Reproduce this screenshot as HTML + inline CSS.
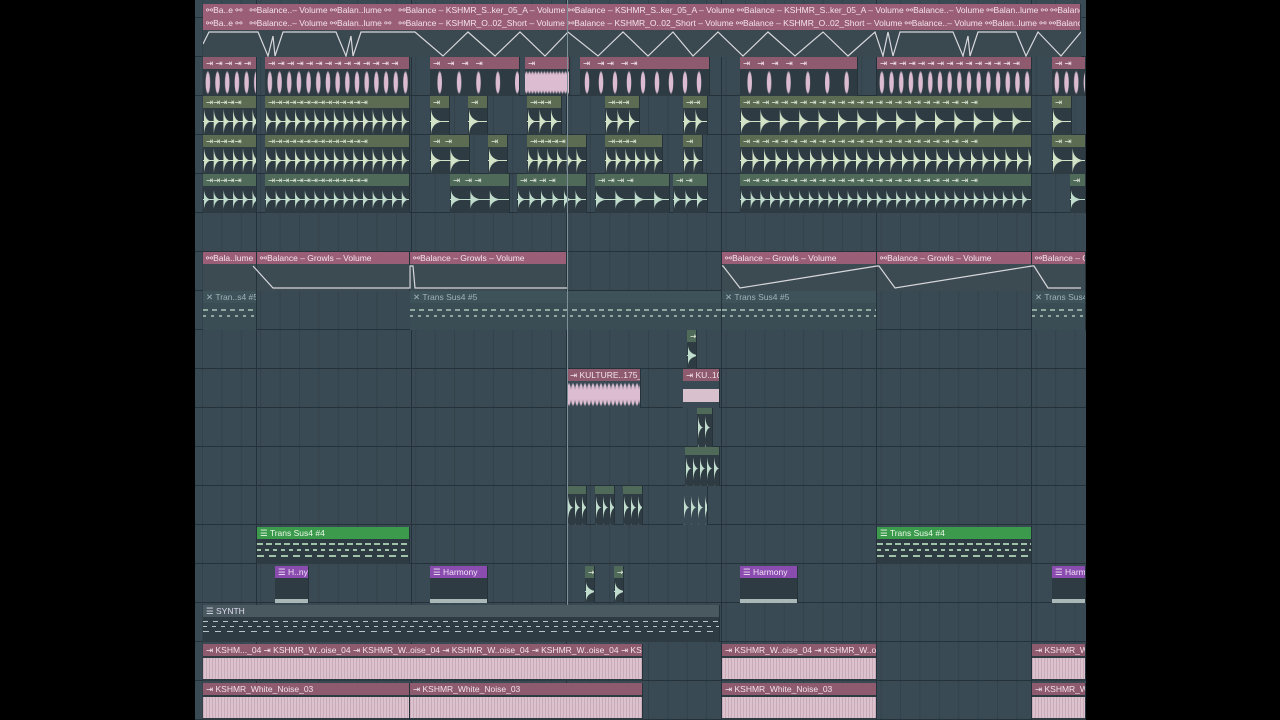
<!DOCTYPE html>
<html><head><meta charset="utf-8"><style>
*{margin:0;padding:0;box-sizing:border-box}
body{width:1280px;height:720px;background:#000;overflow:hidden;position:relative;font-family:"Liberation Sans",sans-serif}
#pl{position:absolute;left:195px;top:0;width:891px;height:720px;background-color:#3a4a54;
background-image:
linear-gradient(to bottom,rgba(0,0,0,0) 38px,#26323a 38px,#26323a 39px),
repeating-linear-gradient(to right,rgba(0,0,0,0) 0,rgba(0,0,0,0) 61px,#25313a 61px,#25313a 62px,rgba(0,0,0,0) 62px,rgba(0,0,0,0) 155px),
repeating-linear-gradient(to right,rgba(0,0,0,0) 0,rgba(0,0,0,0) 18.4px,#33414a 18.4px,#33414a 19.4px);
background-size:100% 39px,155px 100%,19.4px 100%;background-position:0 18px,0 0,8px 0}
.c{position:absolute;overflow:hidden;background:#2e3b43;border-right:1px solid #26323a}
.h{height:12px;font-size:8.5px;line-height:12px;color:#f3e3ea;white-space:nowrap;padding-left:3px;overflow:hidden}
.pk .h{background:#8e5a6e}
.ap .h{background:#9a5e76}
.gr .h{background:#5b6c53;color:#dfe8d8}
.gt .h{background:#506a5a;color:#dfe8d8}
.pu .h{background:#8a4cae;color:#f1e3f8}
.gs .h{background:#3c9a4c;color:#e8f8e8}
.sy .h{background:#4a5860;color:#dde}
.tr .h{background:#3e525a;color:#9fb3b8}
.w{position:absolute;left:0;right:0;top:12px;bottom:0}
svg.w{width:100%;height:calc(100% - 12px)}
.wp{background:radial-gradient(ellipse 2.5px 12px at 50% 50%,#dcbcd0 80%,rgba(0,0,0,0) 100%) 0 0/9.7px 100% repeat-x}
.wn{top:14px;bottom:2px;background:#d6bac6;background-image:repeating-linear-gradient(to right,#c8aab8 0 1px,#dcc2cc 1px 3px)}
.nt{background:repeating-linear-gradient(to right,#9fc2a8 0 6px,rgba(0,0,0,0) 6px 9px) 0 4px/100% 2px no-repeat,repeating-linear-gradient(to right,#9fc2a8 0 4px,rgba(0,0,0,0) 4px 8px) 0 10px/100% 2px no-repeat,repeating-linear-gradient(to right,#9fc2a8 0 7px,rgba(0,0,0,0) 7px 12px) 0 16px/100% 2px no-repeat}
.ntg{background:repeating-linear-gradient(to right,#8ea8a0 0 5px,rgba(0,0,0,0) 5px 9px) 0 6px/100% 2px no-repeat,repeating-linear-gradient(to right,#8ea8a0 0 3px,rgba(0,0,0,0) 3px 8px) 0 12px/100% 2px no-repeat}
.nts{background:repeating-linear-gradient(to right,#b8c4c8 0 5px,rgba(0,0,0,0) 5px 10px) 0 4px/100% 1px no-repeat,repeating-linear-gradient(to right,#b8c4c8 0 4px,rgba(0,0,0,0) 4px 9px) 0 9px/100% 1px no-repeat,repeating-linear-gradient(to right,#b8c4c8 0 6px,rgba(0,0,0,0) 6px 12px) 0 14px/100% 1px no-repeat}
</style></head><body>
<svg width="0" height="0" style="position:absolute"><defs>
<pattern id="g10" width="9.7" height="27" patternUnits="userSpaceOnUse"><path d="M1,1 Q2,13 8.5,13.5 Q2,14 1,26 Z M0,13 h9.7 v1 h-9.7z" fill="#d2e2c6"/></pattern>
<pattern id="g11" width="11.5" height="27" patternUnits="userSpaceOnUse"><path d="M1,1 Q2,13 10,13.5 Q2,14 1,26 Z M0,13 h11.5 v1 h-11.5z" fill="#d2e2c6"/></pattern>
<pattern id="g20" width="19.4" height="27" patternUnits="userSpaceOnUse"><path d="M1,1 Q2,13 14,13.5 Q2,14 1,26 Z M0,13 h19.4 v1 h-19.4z" fill="#d2e2c6"/></pattern>
<pattern id="g6" width="6" height="27" patternUnits="userSpaceOnUse"><path d="M1,1 Q2,13 5.5,13.5 Q2,14 1,26 Z" fill="#d2e2c6"/></pattern>
<pattern id="t10" width="9.7" height="27" patternUnits="userSpaceOnUse"><path d="M1,4 Q2,13 8.5,13.5 Q2,14 1,23 Z M0,13 h9.7 v1 h-9.7z" fill="#c0dccc"/></pattern>
<pattern id="t11" width="11.5" height="27" patternUnits="userSpaceOnUse"><path d="M1,4 Q2,13 10,13.5 Q2,14 1,23 Z M0,13 h11.5 v1 h-11.5z" fill="#c0dccc"/></pattern>
<pattern id="t20" width="19.4" height="27" patternUnits="userSpaceOnUse"><path d="M1,4 Q2,13 14,13.5 Q2,14 1,23 Z M0,13 h19.4 v1 h-19.4z" fill="#c0dccc"/></pattern>
<pattern id="t7" width="7" height="27" patternUnits="userSpaceOnUse"><path d="M1,2 Q2,13 6.5,13.5 Q2,14 1,25 Z" fill="#c0dccc"/></pattern>
</defs></svg>
<div id="pl">
<div class="c ap" style="left:8px;top:4px;width:878px;height:13px;background:#9a5e76"><div class="h">⚯Ba..e ⚯ &nbsp; ⚯Balance..– Volume ⚯Balan..lume ⚯ &nbsp; ⚯Balance – KSHMR_S..ker_05_A – Volume ⚯Balance – KSHMR_S..ker_05_A – Volume ⚯Balance – KSHMR_S..ker_05_A – Volume ⚯Balance..– Volume ⚯Balan..lume ⚯ ⚯Balance – K</div></div>
<div class="c ap" style="left:8px;top:17px;width:878px;height:13px;background:#9a5e76"><div class="h">⚯Ba..e ⚯ &nbsp; ⚯Balance..– Volume ⚯Balan..lume ⚯ &nbsp; ⚯Balance – KSHMR_O..02_Short – Volume ⚯Balance – KSHMR_O..02_Short – Volume ⚯Balance – KSHMR_O..02_Short – Volume ⚯Balance..– Volume ⚯Balan..lume ⚯ ⚯Balance – K</div></div>
<svg style="position:absolute;left:8px;top:30px" width="878" height="27"><rect width="878" height="27" fill="#3a4850"/><polyline fill="none" stroke="#d8d8dc" stroke-width="1.2" points="0,14 6,2 55,2 65,26 70,6 72,26 80,2 133,2 143,26 148,6 150,26 158,2 212,2 240,26 265,2 292,26 317,2 342,26 365,2 395,26 420,2 445,26 470,2 490,26 515,2 540,26 565,2 592,26 620,2 645,26 672,2 680,26 685,2 690,26 697,2 750,2 760,26 765,6 767,26 775,2 813,2 823,26 835,2 858,26 878,2"/></svg>
<!-- row1 pink drums -->
<div class="c pk" style="left:8px;top:57px;width:54px;height:39px"><div class="h">⇥ ⇥ ⇥ ⇥ ⇥</div><div class="w wp"></div></div>
<div class="c pk" style="left:70px;top:57px;width:145px;height:39px"><div class="h">⇥ ⇥ ⇥ ⇥ ⇥ ⇥ ⇥ ⇥ ⇥ ⇥ ⇥ ⇥ ⇥ ⇥</div><div class="w wp"></div></div>
<div class="c pk" style="left:235px;top:57px;width:90px;height:39px"><div class="h">⇥ &nbsp; ⇥ &nbsp; ⇥ &nbsp; ⇥</div><div class="w wp" style="background-size:19.4px 100%"></div></div>
<div class="c pk" style="left:330px;top:57px;width:45px;height:39px"><div class="h">⇥</div><div class="w wp" style="background-size:3px 100%"></div></div>
<div class="c pk" style="left:385px;top:57px;width:130px;height:39px"><div class="h">⇥ &nbsp; ⇥ ⇥ &nbsp; ⇥ ⇥</div><div class="w wp" style="background-size:14px 100%"></div></div>
<div class="c pk" style="left:545px;top:57px;width:118px;height:39px"><div class="h">⇥ &nbsp; ⇥ &nbsp; ⇥ &nbsp; ⇥ &nbsp; ⇥</div><div class="w wp" style="background-size:19.4px 100%"></div></div>
<div class="c pk" style="left:682px;top:57px;width:155px;height:39px"><div class="h">⇥ ⇥ ⇥ ⇥ ⇥ ⇥ ⇥ ⇥ ⇥ ⇥ ⇥ ⇥ ⇥ ⇥ ⇥</div><div class="w wp"></div></div>
<div class="c pk" style="left:857px;top:57px;width:34px;height:39px"><div class="h">⇥ ⇥</div><div class="w wp"></div></div>
<!-- row2 green -->
<div class="c gr" style="left:8px;top:96px;width:54px;height:39px"><div class="h">⇥⇥⇥⇥⇥</div><svg class="w"><rect width="100%" height="100%" fill="url(#g10)"/></svg></div>
<div class="c gr" style="left:70px;top:96px;width:145px;height:39px"><div class="h">⇥⇥⇥⇥⇥⇥⇥⇥⇥⇥⇥⇥⇥⇥</div><svg class="w"><rect width="100%" height="100%" fill="url(#g10)"/></svg></div>
<div class="c gr" style="left:235px;top:96px;width:20px;height:39px"><div class="h">⇥</div><svg class="w"><rect width="100%" height="100%" fill="url(#g20)"/></svg></div>
<div class="c gr" style="left:273px;top:96px;width:20px;height:39px"><div class="h">⇥</div><svg class="w"><rect width="100%" height="100%" fill="url(#g20)"/></svg></div>
<div class="c gr" style="left:332px;top:96px;width:35px;height:39px"><div class="h">⇥⇥⇥</div><svg class="w"><rect width="100%" height="100%" fill="url(#g11)"/></svg></div>
<div class="c gr" style="left:410px;top:96px;width:35px;height:39px"><div class="h">⇥⇥⇥</div><svg class="w"><rect width="100%" height="100%" fill="url(#g11)"/></svg></div>
<div class="c gr" style="left:488px;top:96px;width:25px;height:39px"><div class="h">⇥⇥</div><svg class="w"><rect width="100%" height="100%" fill="url(#g11)"/></svg></div>
<div class="c gr" style="left:545px;top:96px;width:292px;height:39px"><div class="h">⇥ ⇥ ⇥ ⇥ ⇥ ⇥ ⇥ ⇥ ⇥ ⇥ ⇥ ⇥ ⇥ ⇥ ⇥ ⇥ ⇥ ⇥ ⇥ ⇥ ⇥ ⇥ ⇥ ⇥ ⇥</div><svg class="w"><rect width="100%" height="100%" fill="url(#g20)"/></svg></div>
<div class="c gr" style="left:857px;top:96px;width:20px;height:39px"><div class="h">⇥</div><svg class="w"><rect width="100%" height="100%" fill="url(#g20)"/></svg></div>
<!-- row3 -->
<div class="c gr" style="left:8px;top:135px;width:54px;height:39px"><div class="h">⇥⇥⇥⇥⇥</div><svg class="w"><rect width="100%" height="100%" fill="url(#g10)"/></svg></div>
<div class="c gr" style="left:70px;top:135px;width:145px;height:39px"><div class="h">⇥⇥⇥⇥⇥⇥⇥⇥⇥⇥⇥⇥⇥⇥</div><svg class="w"><rect width="100%" height="100%" fill="url(#g10)"/></svg></div>
<div class="c gr" style="left:235px;top:135px;width:40px;height:39px"><div class="h">⇥ &nbsp;⇥</div><svg class="w"><rect width="100%" height="100%" fill="url(#g20)"/></svg></div>
<div class="c gr" style="left:293px;top:135px;width:20px;height:39px"><div class="h">⇥</div><svg class="w"><rect width="100%" height="100%" fill="url(#g20)"/></svg></div>
<div class="c gr" style="left:332px;top:135px;width:60px;height:39px"><div class="h">⇥⇥⇥⇥⇥</div><svg class="w"><rect width="100%" height="100%" fill="url(#g10)"/></svg></div>
<div class="c gr" style="left:410px;top:135px;width:58px;height:39px"><div class="h">⇥⇥⇥⇥</div><svg class="w"><rect width="100%" height="100%" fill="url(#g10)"/></svg></div>
<div class="c gr" style="left:488px;top:135px;width:20px;height:39px"><div class="h">⇥</div><svg class="w"><rect width="100%" height="100%" fill="url(#g10)"/></svg></div>
<div class="c gr" style="left:545px;top:135px;width:292px;height:39px"><div class="h">⇥ ⇥ ⇥ ⇥ ⇥ ⇥ ⇥ ⇥ ⇥ ⇥ ⇥ ⇥ ⇥ ⇥ ⇥ ⇥ ⇥ ⇥ ⇥ ⇥ ⇥ ⇥ ⇥ ⇥ ⇥</div><svg class="w"><rect width="100%" height="100%" fill="url(#g11)"/></svg></div>
<div class="c gr" style="left:857px;top:135px;width:34px;height:39px"><div class="h">⇥ ⇥</div><svg class="w"><rect width="100%" height="100%" fill="url(#g20)"/></svg></div>
<!-- row4 -->
<div class="c gt" style="left:8px;top:174px;width:54px;height:39px"><div class="h">⇥⇥⇥⇥⇥</div><svg class="w"><rect width="100%" height="100%" fill="url(#t10)"/></svg></div>
<div class="c gt" style="left:70px;top:174px;width:145px;height:39px"><div class="h">⇥⇥⇥⇥⇥⇥⇥⇥⇥⇥⇥⇥⇥⇥</div><svg class="w"><rect width="100%" height="100%" fill="url(#t10)"/></svg></div>
<div class="c gt" style="left:255px;top:174px;width:60px;height:39px"><div class="h">⇥ &nbsp;⇥ ⇥</div><svg class="w"><rect width="100%" height="100%" fill="url(#t20)"/></svg></div>
<div class="c gt" style="left:322px;top:174px;width:70px;height:39px"><div class="h">⇥ ⇥ ⇥ ⇥</div><svg class="w"><rect width="100%" height="100%" fill="url(#t11)"/></svg></div>
<div class="c gt" style="left:400px;top:174px;width:75px;height:39px"><div class="h">⇥ ⇥ ⇥ ⇥</div><svg class="w"><rect width="100%" height="100%" fill="url(#t20)"/></svg></div>
<div class="c gt" style="left:478px;top:174px;width:35px;height:39px"><div class="h">⇥ ⇥</div><svg class="w"><rect width="100%" height="100%" fill="url(#t11)"/></svg></div>
<div class="c gt" style="left:545px;top:174px;width:292px;height:39px"><div class="h">⇥ ⇥ ⇥ ⇥ ⇥ ⇥ ⇥ ⇥ ⇥ ⇥ ⇥ ⇥ ⇥ ⇥ ⇥ ⇥ ⇥ ⇥ ⇥ ⇥ ⇥ ⇥ ⇥ ⇥ ⇥</div><svg class="w"><rect width="100%" height="100%" fill="url(#t10)"/></svg></div>
<div class="c gt" style="left:875px;top:174px;width:16px;height:39px"><div class="h">⇥</div><svg class="w"><rect width="100%" height="100%" fill="url(#t20)"/></svg></div>
<!-- growls automation -->
<div class="c ap" style="left:8px;top:252px;width:54px;height:39px;background:#3c4a52"><div class="h">⚯Bala..lume</div></div>
<div class="c ap" style="left:62px;top:252px;width:153px;height:39px;background:#3c4a52"><div class="h">⚯Balance – Growls – Volume</div></div>
<div class="c ap" style="left:215px;top:252px;width:157px;height:39px;background:#3c4a52"><div class="h">⚯Balance – Growls – Volume</div></div>
<div class="c ap" style="left:527px;top:252px;width:155px;height:39px;background:#3c4a52"><div class="h">⚯Balance – Growls – Volume</div></div>
<div class="c ap" style="left:682px;top:252px;width:155px;height:39px;background:#3c4a52"><div class="h">⚯Balance – Growls – Volume</div></div>
<div class="c ap" style="left:837px;top:252px;width:54px;height:39px;background:#3c4a52"><div class="h">⚯Balance – G</div></div>
<svg style="position:absolute;left:8px;top:264px" width="878" height="27"><polyline fill="none" stroke="#d8d8dc" stroke-width="1.2" points="50,2 70,24 207,24 207,2 210,2 212,24 364,24"/><polyline fill="none" stroke="#d8d8dc" stroke-width="1.2" points="519,2 520,2 537,24 674,2 676,2 692,24 829,2 831,2 845,24 878,24"/></svg>
<!-- trans sus4 #5 -->
<div class="c tr" style="left:8px;top:291px;width:54px;height:39px;background:#3a4c54"><div class="h">✕ Tran..s4 #5</div><div class="w ntg"></div></div>
<div class="c tr" style="left:215px;top:291px;width:312px;height:39px;background:#3a4c54"><div class="h">✕ Trans Sus4 #5</div><div class="w ntg"></div></div>
<div class="c tr" style="left:527px;top:291px;width:155px;height:39px;background:#3a4c54"><div class="h">✕ Trans Sus4 #5</div><div class="w ntg"></div></div>
<div class="c tr" style="left:837px;top:291px;width:54px;height:39px;background:#3a4c54"><div class="h">✕ Trans Sus4 #5</div><div class="w ntg"></div></div>
<!-- misc -->
<div class="c gt" style="left:492px;top:330px;width:10px;height:39px"><div class="h">⇥</div><svg class="w"><rect width="100%" height="100%" fill="url(#t20)"/></svg></div>
<div class="c pk" style="left:372px;top:369px;width:74px;height:39px;background:#3a4a54"><div class="h">⇥ KULTURE..175_04</div><div class="w wp" style="background-size:4px 100%"></div></div>
<div class="c pk" style="left:488px;top:369px;width:37px;height:39px;background:#3a4a54"><div class="h">⇥ KU..10</div><div class="w" style="top:20px;bottom:6px;background:#d8c0cc"></div></div>
<div class="c gt" style="left:502px;top:408px;width:16px;height:39px"><div class="h" style="height:6px"></div><svg class="w" style="top:6px;height:33px"><rect width="100%" height="100%" fill="url(#t7)"/></svg></div>
<div class="c gt" style="left:490px;top:447px;width:35px;height:39px"><div class="h" style="height:8px"></div><svg class="w" style="top:8px;height:31px"><rect width="100%" height="100%" fill="url(#t7)"/></svg></div>
<div class="c gt" style="left:372px;top:486px;width:20px;height:39px"><div class="h" style="height:8px"></div><svg class="w" style="top:8px;height:31px"><rect width="100%" height="100%" fill="url(#t7)"/></svg></div>
<div class="c gt" style="left:400px;top:486px;width:20px;height:39px"><div class="h" style="height:8px"></div><svg class="w" style="top:8px;height:31px"><rect width="100%" height="100%" fill="url(#t7)"/></svg></div>
<div class="c gt" style="left:428px;top:486px;width:20px;height:39px"><div class="h" style="height:8px"></div><svg class="w" style="top:8px;height:31px"><rect width="100%" height="100%" fill="url(#t7)"/></svg></div>
<div class="c gt" style="left:488px;top:486px;width:25px;height:39px;background:#3a4a54"><svg class="w" style="top:8px;height:31px"><rect width="100%" height="100%" fill="url(#t7)"/></svg></div>
<!-- trans sus4 #4 -->
<div class="c gs" style="left:62px;top:527px;width:153px;height:37px"><div class="h">☰ Trans Sus4 #4</div><div class="w nt"></div></div>
<div class="c gs" style="left:682px;top:527px;width:155px;height:37px"><div class="h">☰ Trans Sus4 #4</div><div class="w nt"></div></div>
<!-- harmony -->
<div class="c pu" style="left:80px;top:566px;width:34px;height:37px"><div class="h">☰ H..ny</div><div style="position:absolute;left:0;right:0;bottom:0;height:4px;background:#aab8b8"></div></div>
<div class="c pu" style="left:235px;top:566px;width:58px;height:37px"><div class="h">☰ Harmony</div><div style="position:absolute;left:0;right:0;bottom:0;height:4px;background:#aab8b8"></div></div>
<div class="c pu" style="left:545px;top:566px;width:58px;height:37px"><div class="h">☰ Harmony</div><div style="position:absolute;left:0;right:0;bottom:0;height:4px;background:#aab8b8"></div></div>
<div class="c pu" style="left:857px;top:566px;width:34px;height:37px"><div class="h">☰ Harmo</div><div style="position:absolute;left:0;right:0;bottom:0;height:4px;background:#aab8b8"></div></div>
<div class="c gt" style="left:390px;top:566px;width:10px;height:37px"><div class="h">⇥</div><svg class="w"><rect width="100%" height="100%" fill="url(#t20)"/></svg></div>
<div class="c gt" style="left:419px;top:566px;width:10px;height:37px"><div class="h">⇥</div><svg class="w"><rect width="100%" height="100%" fill="url(#t20)"/></svg></div>
<!-- synth -->
<div class="c sy" style="left:8px;top:605px;width:517px;height:37px;background:#2e3b42"><div class="h">☰ SYNTH</div><div class="w nts"></div></div>
<!-- noise -->
<div class="c pk" style="left:8px;top:644px;width:440px;height:37px"><div class="h">⇥ KSHM..._04 ⇥ KSHMR_W..oise_04 ⇥ KSHMR_W..oise_04 ⇥ KSHMR_W..oise_04 ⇥ KSHMR_W..oise_04 ⇥ KSHMR_W..oise_04</div><div class="w wn"></div></div>
<div class="c pk" style="left:527px;top:644px;width:155px;height:37px"><div class="h">⇥ KSHMR_W..oise_04 ⇥ KSHMR_W..oise_04</div><div class="w wn"></div></div>
<div class="c pk" style="left:837px;top:644px;width:54px;height:37px"><div class="h">⇥ KSHMR_W..o</div><div class="w wn"></div></div>
<div class="c pk" style="left:8px;top:683px;width:207px;height:37px"><div class="h">⇥ KSHMR_White_Noise_03</div><div class="w wn"></div></div>
<div class="c pk" style="left:215px;top:683px;width:233px;height:37px"><div class="h">⇥ KSHMR_White_Noise_03</div><div class="w wn"></div></div>
<div class="c pk" style="left:527px;top:683px;width:155px;height:37px"><div class="h">⇥ KSHMR_White_Noise_03</div><div class="w wn"></div></div>
<div class="c pk" style="left:837px;top:683px;width:54px;height:37px"><div class="h">⇥ KSHMR_Whi</div><div class="w wn"></div></div>
<!-- playhead -->
<div style="position:absolute;left:372px;top:0;width:1px;height:605px;background:#7f9098"></div>
</div>
</body></html>
